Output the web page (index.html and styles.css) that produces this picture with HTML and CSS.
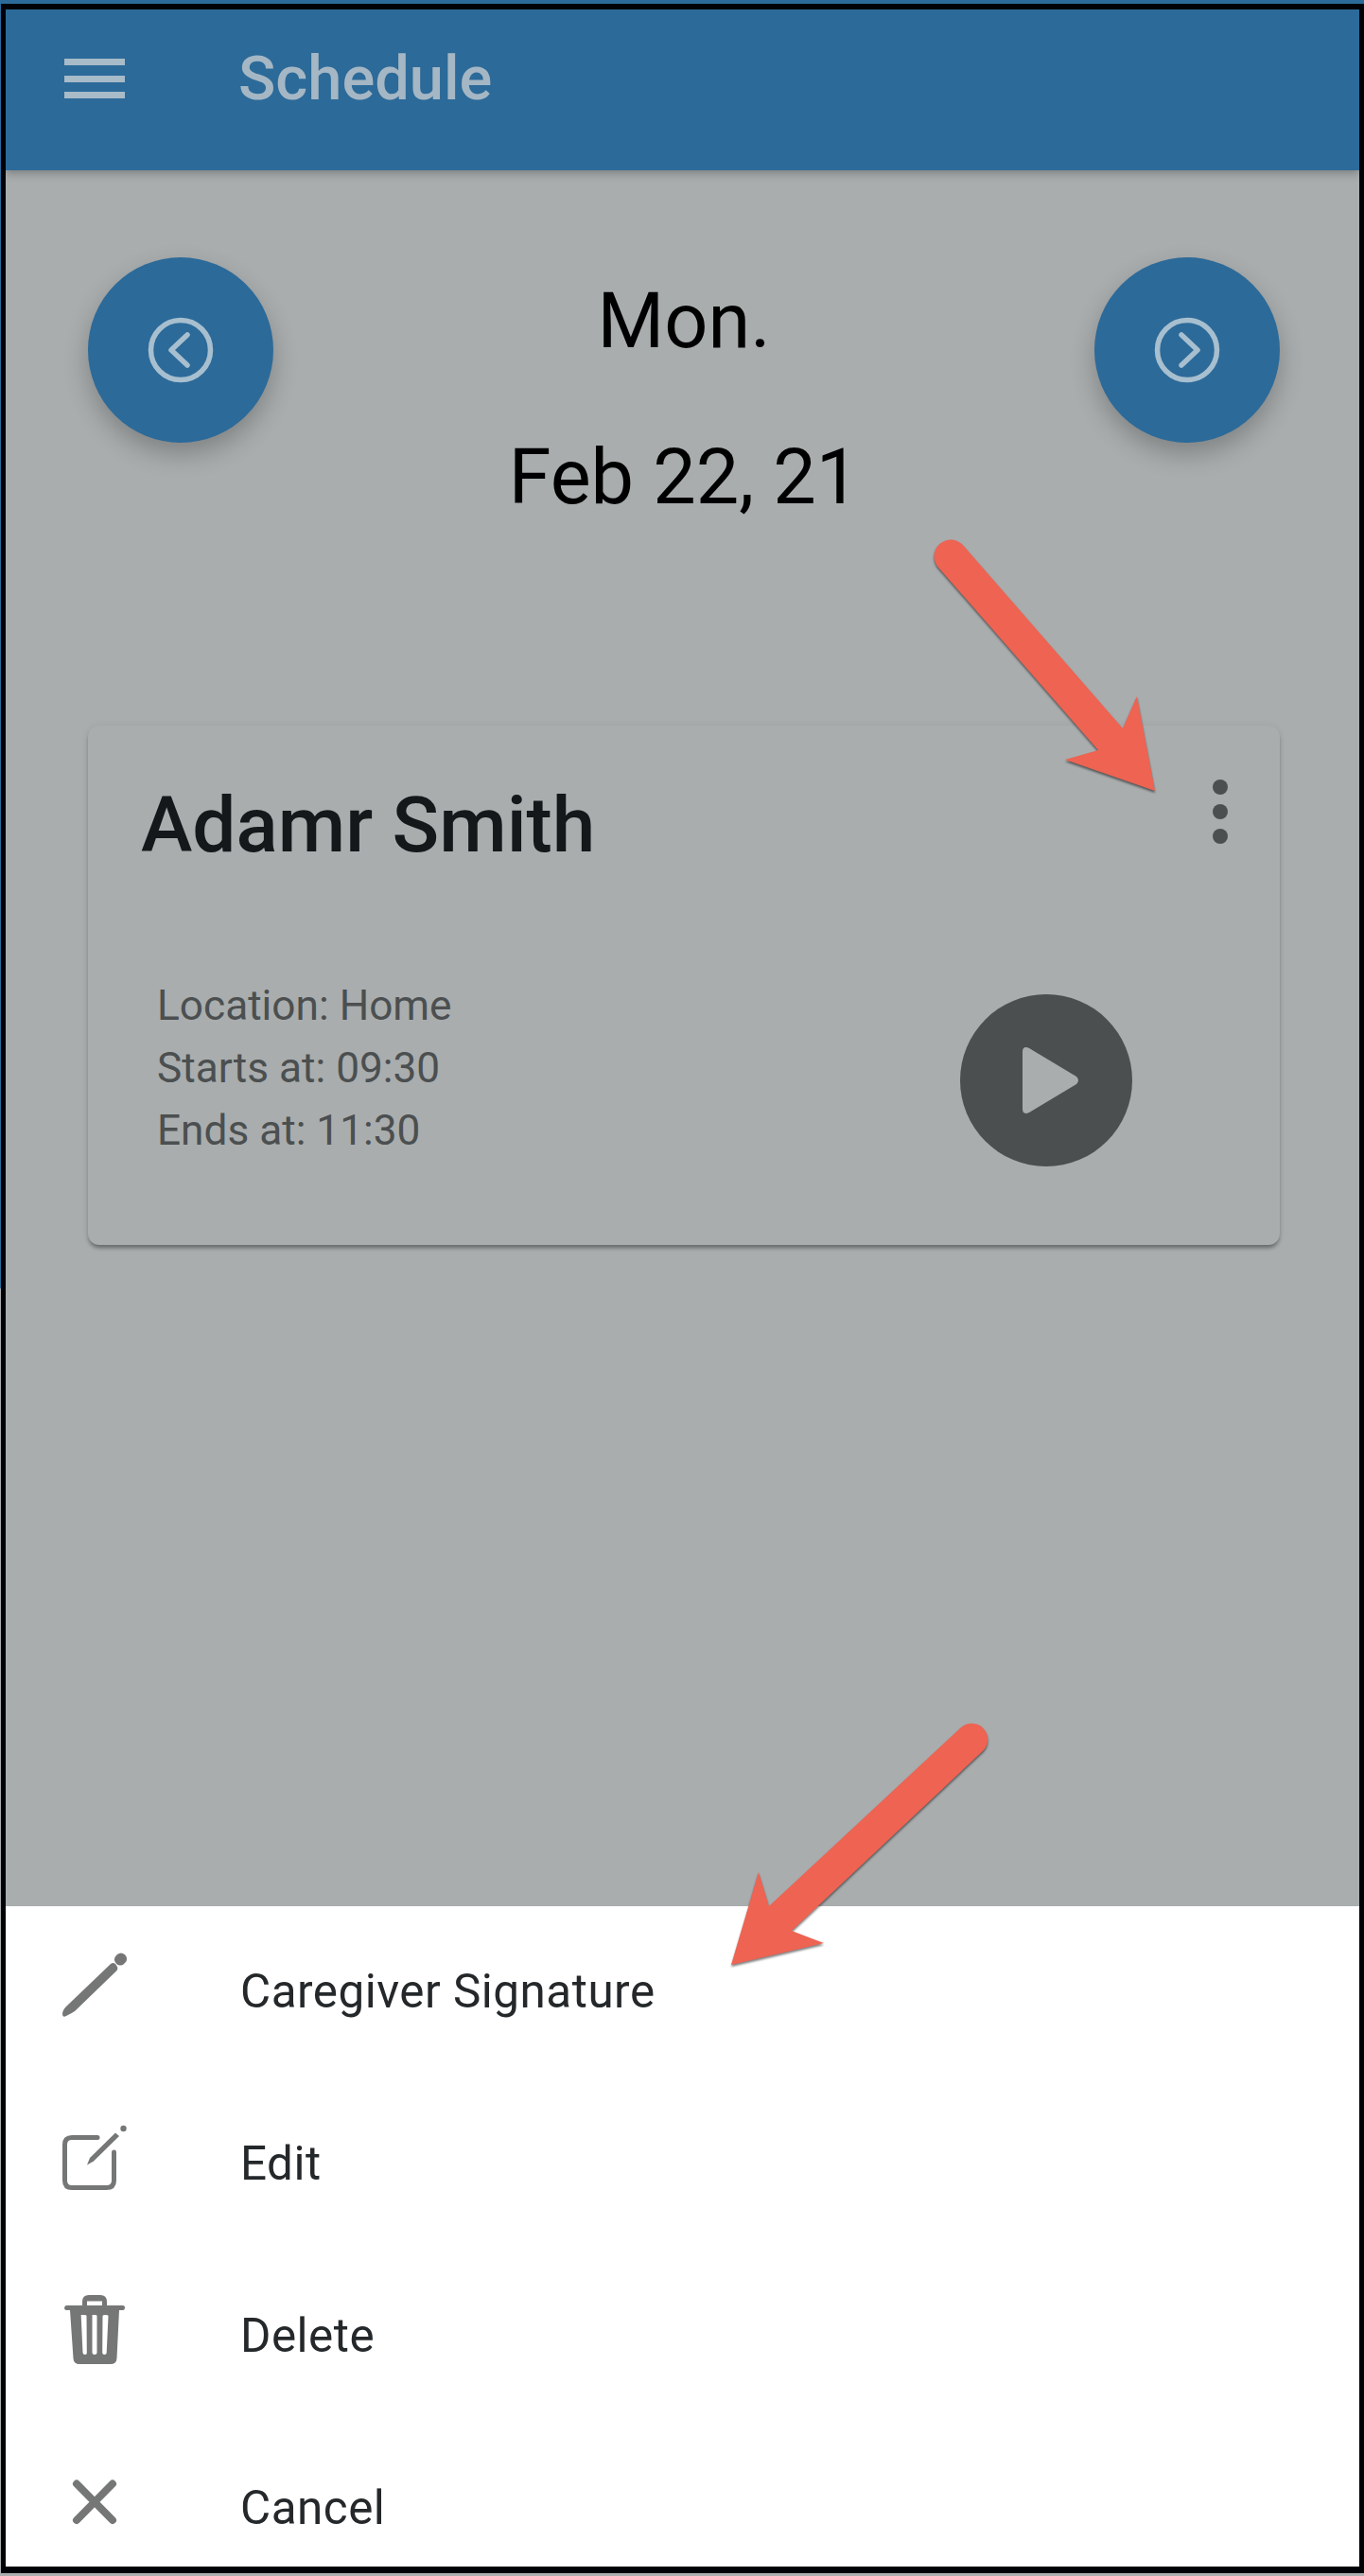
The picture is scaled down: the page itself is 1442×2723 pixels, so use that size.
FILE: index.html
```html
<!DOCTYPE html>
<html lang="en">
<head>
<meta charset="utf-8">
<title>Schedule</title>
<link rel="stylesheet" href="styles.css">
</head>
<body>
<div class="page">
  <div class="frame">
    <header class="appbar">
      <div class="menu"><span></span><span></span><span></span></div>
      <h1 class="appbar-title">Schedule</h1>
    </header>
    <main class="content">
      <div class="day-nav">
        <button class="round-btn" type="button">
          <svg class="chev" viewBox="150 330 82 80"><circle cx="191" cy="370" r="31.5"/><path d="M198 354L181 370L198 386"/></svg>
        </button>
        <div class="date"><div>Mon.</div><div>Feb 22, 21</div></div>
        <button class="round-btn" type="button">
          <svg class="chev" viewBox="1213 330 82 80"><circle cx="1254" cy="370" r="31.5"/><path d="M1248 354L1265 370L1248 386"/></svg>
        </button>
      </div>
      <section class="card">
        <div class="card-head">
          <h2 class="card-name">Adamr Smith</h2>
          <div class="dots"><span></span><span></span><span></span></div>
        </div>
        <div class="card-body">
          <div class="info">
            <div>Location: Home</div>
            <div>Starts at: 09:30</div>
            <div>Ends at: 11:30</div>
          </div>
          <div class="play">
            <svg class="play-icon" viewBox="1075 1100 72 84"><path d="M1082 1112Q1082 1105 1089 1108L1139 1138Q1143 1142 1139 1146L1089 1176Q1082 1179 1082 1172Z"/></svg>
          </div>
        </div>
      </section>
    </main>
    <nav class="sheet">
      <div class="row">
        <svg class="row-icon" viewBox="60 2056 80 100"><path d="M66 2129Q66 2125 70 2121L117 2076Q119.500 2074 122 2076L124 2079Q125 2081 123.500 2083L79 2126Q76 2128 70 2131Q66 2133 66 2129Z"/><rect x="121" y="2065" width="13" height="12" rx="5.500" transform="rotate(-45 127.500 2071)"/></svg>
        <span class="row-label">Caregiver Signature</span>
      </div>
      <div class="row">
        <svg class="row-icon" viewBox="60 2238 80 100"><path class="line" d="M103 2259.500H76Q68.500 2259.500 68.500 2267V2305Q68.500 2312.500 76 2312.500H112.500Q120.500 2312.500 120.500 2305V2275"/><path d="M92 2288.500L95 2281L122 2254.500L126 2258L99 2284.500Z"/><circle cx="130.500" cy="2250" r="3.200"/></svg>
        <span class="row-label">Edit</span>
      </div>
      <div class="row">
        <svg class="row-icon" viewBox="60 2420 80 100"><path fill-rule="evenodd" d="M87 2437V2433Q87 2426 94 2426H106Q113 2426 113 2433V2437H130Q132.500 2437.500 132 2440Q131.500 2442 130 2442H126L123.500 2493Q123 2499 117 2499H84Q78 2499 77.500 2493L74 2442H70Q68.500 2442 68 2440Q68 2437.500 70 2437ZM92 2437H108V2432.500H92ZM86 2447Q85.500 2447 85.700 2448L87.500 2487Q87.700 2489 90 2489Q92 2489 91.800 2487L91.500 2448Q91.500 2447 89 2447ZM97.500 2447Q97.500 2447 97.500 2448V2487Q97.500 2489 100 2489Q102.500 2489 102.500 2487V2448Q102.500 2447 100 2447ZM108.500 2448L108.200 2487Q108.200 2489 110.500 2489Q112.500 2489 112.700 2487L114.500 2448Q114.500 2447 111.500 2447Q108.500 2447 108.500 2448Z"/></svg>
        <span class="row-label">Delete</span>
      </div>
      <div class="row">
        <svg class="row-icon" viewBox="60 2602 80 100"><path class="line-x" d="M81 2625.500L119 2664M119 2625.500L81 2664"/></svg>
        <span class="row-label">Cancel</span>
      </div>
    </nav>
  </div>
  <svg class="arrow arrow-one" viewBox="980 560 250 285"><path d="M1018.300 576.600L1187 770L1202 736L1221 836L1126 803L1161 793L991.700 599.400A17.500 17.500 0 0 1 1018.300 576.600Z"/></svg>
  <svg class="arrow arrow-two" viewBox="765 1815 290 270"><path d="M1016 1826L813 2015L802 1979L773 2077L871 2054L837 2041L1040 1850A17 17 0 0 0 1016 1826Z"/></svg>
</div>
</body>
</html>
```

FILE: styles.css
```css
* { box-sizing: border-box; }
html, body { margin: 0; padding: 0; }
body { font-family: Roboto, "Liberation Sans", sans-serif; }

.page {
  position: relative;
  width: 1442px;
  height: 2723px;
  padding: 4px 0 3px 1px;
  background: linear-gradient(#2c6a99 0 50%, #aaaeaf 50% 100%);
}
.frame {
  display: flex;
  flex-direction: column;
  width: 1441px;
  height: 2716px;
  border-style: solid;
  border-color: #000208;
  border-width: 6px 5px 7px 5px;
  overflow: hidden;
}

.appbar {
  position: relative;
  z-index: 1;
  flex: none;
  display: flex;
  align-items: center;
  height: 170px;
  padding: 0 0 24px 62px;
  background: #2c6a99;
  box-shadow: 0 3px 9px rgba(0, 0, 0, .28);
}
.menu { display: flex; flex-direction: column; gap: 10.5px; }
.menu span { display: block; width: 64px; height: 7px; background: #a7bbc9; }
.appbar-title {
  margin: 0 0 0 120px;
  font-size: 65px;
  line-height: 74px;
  font-weight: 500;
  color: #a5b7c4;
}

.content {
  flex: 1;
  min-height: 0;
  padding: 78px 84px 0 87px;
  background: #a9adae;
}
.day-nav { display: flex; justify-content: space-between; align-items: flex-start; height: 330px; }
.round-btn {
  display: flex;
  align-items: center;
  justify-content: center;
  width: 196px;
  height: 196px;
  margin-top: 14px;
  padding: 0;
  border: 0;
  border-radius: 50%;
  background: #2c6a99;
  box-shadow: 0 12px 26px rgba(0, 0, 0, .24);
}
.chev { width: 82px; height: 80px; fill: none; stroke: #a7bfcf; stroke-width: 5.5px; stroke-linecap: round; stroke-linejoin: round; }
.date { margin-top: -1px; font-size: 81px; line-height: 165px; color: #000; text-align: center; }

.card {
  height: 549px;
  margin-top: 179px;
  border-radius: 12px;
  background: #a9adae;
  box-shadow: 0 4px 4px -1px rgba(0, 0, 0, .38), 0 0 8px rgba(0, 0, 0, .06);
}
.card-head { display: flex; justify-content: space-between; align-items: flex-start; padding: 55px 55px 0 56px; }
.card-name { margin: 0; font-size: 82px; line-height: 100px; font-weight: 500; color: #14181a; }
.dots { display: flex; flex-direction: column; gap: 10px; margin-top: 2px; }
.dots span { display: block; width: 16px; height: 16px; border-radius: 50%; background: #4b4f50; }
.card-body { display: flex; align-items: flex-start; margin-top: 108px; padding: 0 156px 0 73px; }
.info { font-size: 44.2px; line-height: 66px; color: #4b4f50; }
.play {
  display: flex;
  align-items: center;
  justify-content: center;
  width: 182px;
  height: 182px;
  margin: 21px 0 0 auto;
  border-radius: 50%;
  background: #4b4f50;
}
.play-icon { width: 72px; height: 84px; margin: 0 -4px 0 4px; fill: #a9adae; }

.sheet { flex: none; height: 698px; overflow: hidden; position: relative; z-index: 2; background: #fff; }
.row { display: flex; align-items: center; gap: 114px; height: 182px; padding-left: 54px; }
.row-icon { flex: none; width: 80px; height: 100px; fill: #757777; }
.line { fill: none; stroke: #757777; stroke-width: 5px; stroke-linecap: round; }
.line-x { fill: none; stroke: #757777; stroke-width: 8px; stroke-linecap: round; }
.row-label { margin-top: -3px; font-size: 49.4px; letter-spacing: .5px; color: #25282a; }

.arrow { position: absolute; z-index: 3; fill: #ee6352; filter: drop-shadow(0 2px 1px rgba(0, 0, 0, .5)); }
.arrow-one { left: 980px; top: 560px; width: 250px; height: 285px; }
.arrow-two { left: 765px; top: 1815px; width: 290px; height: 270px; }
```
